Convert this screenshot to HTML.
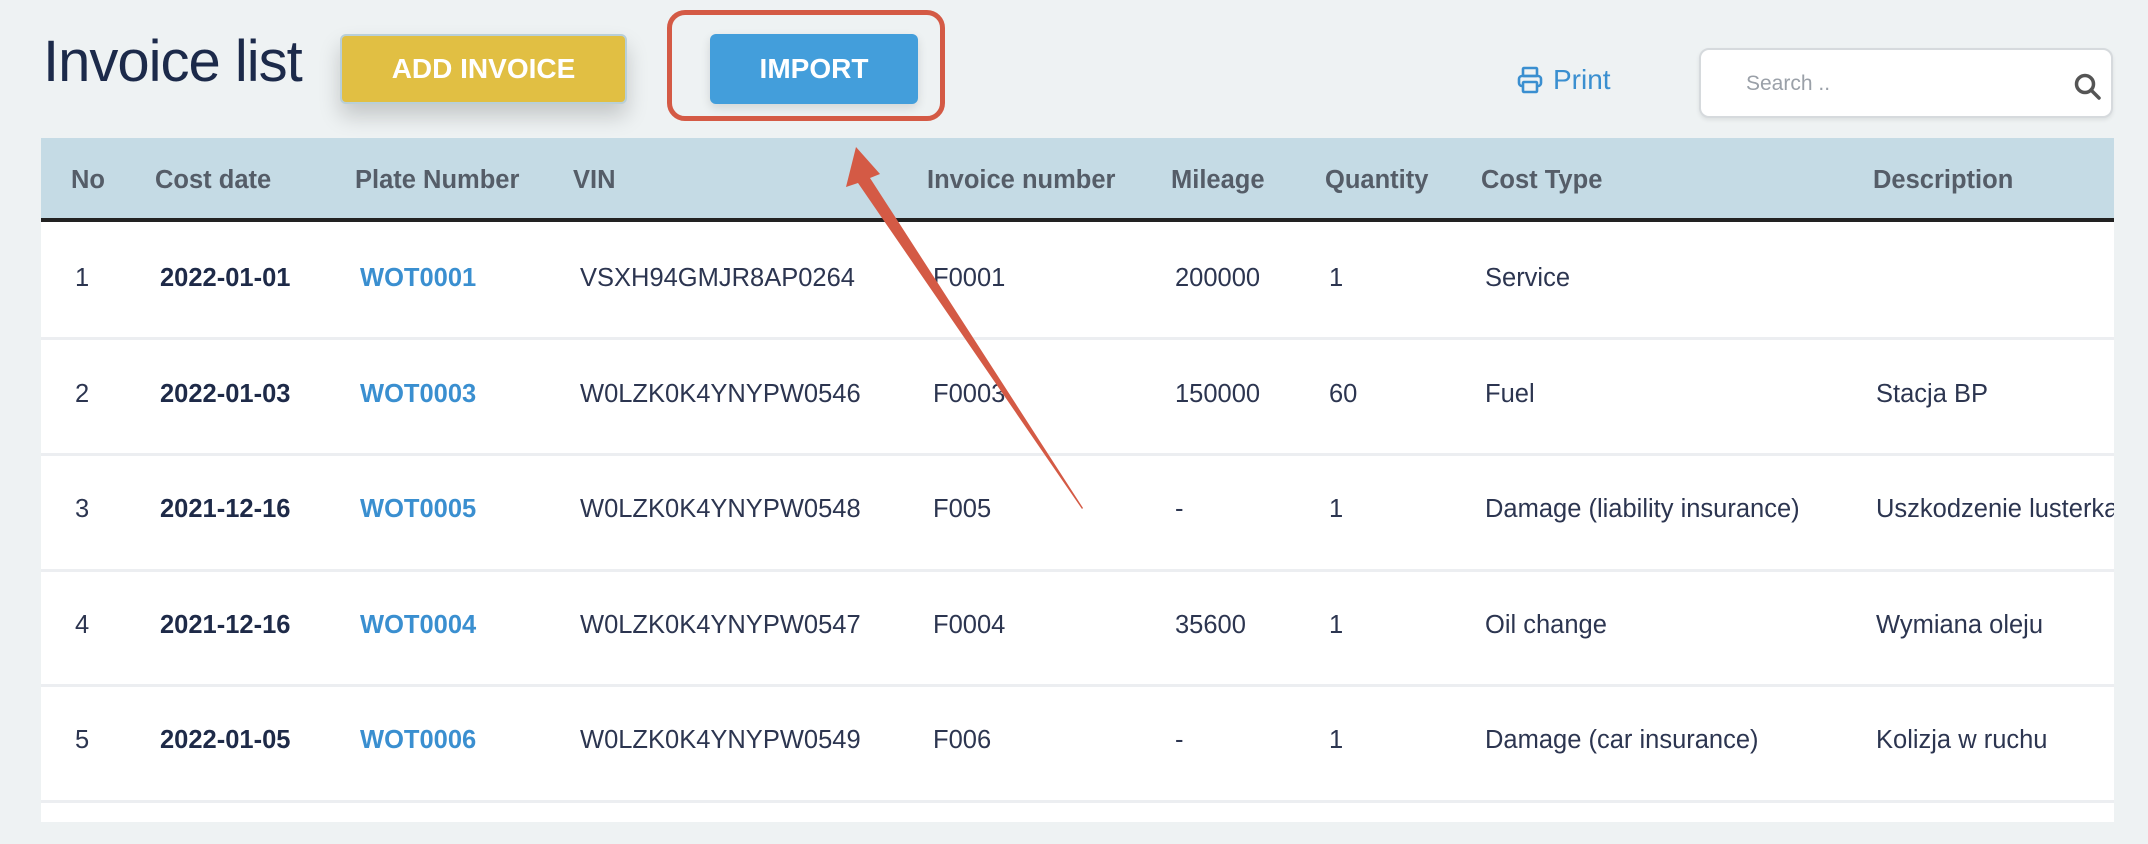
<!DOCTYPE html>
<html><head><meta charset="utf-8"><style>
*{margin:0;padding:0;box-sizing:border-box}
body{width:2148px;height:844px;background:#eef2f3;font-family:"Liberation Sans",Arial,sans-serif;position:relative;overflow:hidden}
.a{position:absolute;white-space:nowrap}
.title{left:43px;top:28px;font-size:58px;color:#1c2a4a;letter-spacing:-1px}
.btn{border-radius:6px;color:#fff;font-weight:bold;font-size:28px;display:flex;align-items:center;justify-content:center}
.add{left:340px;top:34px;width:287px;height:70px;background:#e1bf43;border:2px solid #b9cfd8;box-shadow:0 12px 22px rgba(0,0,0,.18)}
.imp{left:710px;top:34px;width:208px;height:70px;background:#439edb;box-shadow:0 4px 10px rgba(0,0,0,.12)}
.red{left:667px;top:10px;width:278px;height:111px;border:5px solid #d45a45;border-radius:18px}
.print{left:1517px;top:64px;font-size:28px;color:#3a8fd0;display:flex;align-items:center;gap:10px}
.search{left:1699px;top:48px;width:414px;height:70px;background:#fff;border:2px solid #d6dadd;border-radius:10px;box-shadow:0 2px 4px rgba(0,0,0,.08)}
.search span{position:absolute;left:45px;top:22px;font-size:21px;color:#9aa0a8}
.thead{left:41px;top:138px;width:2073px;height:84px;background:#c5dbe5;border-bottom:4px solid #222}
.tbody{left:41px;top:222px;width:2073px;height:600px;background:#fff}
.sep{position:absolute;left:41px;width:2073px;height:3px;background:#eceef1}
.h{font-weight:bold;font-size:25.5px;color:#555d68;top:166px}
.c{font-size:25.5px;color:#2c3550}
.b{font-weight:bold;color:#1e2a48}
.l{font-weight:bold;color:#3a8fd0}
</style></head><body>
<div class="a title">Invoice list</div>
<div class="a btn add">ADD INVOICE</div>
<div class="a btn imp">IMPORT</div>
<div class="a red"></div>
<div class="a print"><svg width="26" height="28" viewBox="0 0 26 28" fill="none" stroke="#3a8fd0" stroke-width="2.6"><rect x="6" y="2" width="14" height="8" rx="1"/><rect x="2" y="10" width="22" height="10" rx="3"/><rect x="6" y="16" width="14" height="10" rx="1" fill="#eef2f3"/></svg>Print</div>
<div class="a search"><span>Search ..</span><svg style="position:absolute;right:8px;top:22px" width="30" height="30" viewBox="0 0 30 30" fill="none" stroke="#555" stroke-width="3.5"><circle cx="12" cy="12" r="8.5"/><path d="M18 18l8 8" stroke-linecap="round"/></svg></div>
<div class="a thead"></div>
<div class="a tbody"></div>
<div class="sep" style="top:337px"></div><div class="sep" style="top:453px"></div><div class="sep" style="top:569px"></div><div class="sep" style="top:684px"></div><div class="sep" style="top:800px"></div>
<div class="a h" style="left:71px">No</div><div class="a h" style="left:155px">Cost date</div><div class="a h" style="left:355px">Plate Number</div><div class="a h" style="left:573px">VIN</div><div class="a h" style="left:927px">Invoice number</div><div class="a h" style="left:1171px">Mileage</div><div class="a h" style="left:1325px">Quantity</div><div class="a h" style="left:1481px">Cost Type</div><div class="a h" style="left:1873px">Description</div>

<div class="a c" style="left:75px;top:264px">1</div><div class="a c b" style="left:160px;top:264px">2022-01-01</div><div class="a c l" style="left:360px;top:264px">WOT0001</div><div class="a c" style="left:580px;top:264px">VSXH94GMJR8AP0264</div><div class="a c" style="left:933px;top:264px">F0001</div><div class="a c" style="left:1175px;top:264px">200000</div><div class="a c" style="left:1329px;top:264px">1</div><div class="a c" style="left:1485px;top:264px">Service</div>

<div class="a c" style="left:75px;top:380px">2</div><div class="a c b" style="left:160px;top:380px">2022-01-03</div><div class="a c l" style="left:360px;top:380px">WOT0003</div><div class="a c" style="left:580px;top:380px">W0LZK0K4YNYPW0546</div><div class="a c" style="left:933px;top:380px">F0003</div><div class="a c" style="left:1175px;top:380px">150000</div><div class="a c" style="left:1329px;top:380px">60</div><div class="a c" style="left:1485px;top:380px">Fuel</div><div class="a c" style="left:1876px;top:380px">Stacja BP</div>

<div class="a c" style="left:75px;top:495px">3</div><div class="a c b" style="left:160px;top:495px">2021-12-16</div><div class="a c l" style="left:360px;top:495px">WOT0005</div><div class="a c" style="left:580px;top:495px">W0LZK0K4YNYPW0548</div><div class="a c" style="left:933px;top:495px">F005</div><div class="a c" style="left:1175px;top:495px">-</div><div class="a c" style="left:1329px;top:495px">1</div><div class="a c" style="left:1485px;top:495px">Damage (liability insurance)</div><div class="a c" style="left:1876px;top:495px">Uszkodzenie lusterka</div>

<div class="a c" style="left:75px;top:611px">4</div><div class="a c b" style="left:160px;top:611px">2021-12-16</div><div class="a c l" style="left:360px;top:611px">WOT0004</div><div class="a c" style="left:580px;top:611px">W0LZK0K4YNYPW0547</div><div class="a c" style="left:933px;top:611px">F0004</div><div class="a c" style="left:1175px;top:611px">35600</div><div class="a c" style="left:1329px;top:611px">1</div><div class="a c" style="left:1485px;top:611px">Oil change</div><div class="a c" style="left:1876px;top:611px">Wymiana oleju</div>

<div class="a c" style="left:75px;top:726px">5</div><div class="a c b" style="left:160px;top:726px">2022-01-05</div><div class="a c l" style="left:360px;top:726px">WOT0006</div><div class="a c" style="left:580px;top:726px">W0LZK0K4YNYPW0549</div><div class="a c" style="left:933px;top:726px">F006</div><div class="a c" style="left:1175px;top:726px">-</div><div class="a c" style="left:1329px;top:726px">1</div><div class="a c" style="left:1485px;top:726px">Damage (car insurance)</div><div class="a c" style="left:1876px;top:726px">Kolizja w ruchu</div>

<div style="position:absolute;left:2114px;top:222px;width:34px;height:600px;background:#eef2f3"></div>
<svg class="a" style="left:0;top:0" width="2148" height="844"><polygon points="856,147 880,174 870,178 1083,508 1082,509 858,183 846,187" fill="#d45a45"/></svg>
</body></html>
